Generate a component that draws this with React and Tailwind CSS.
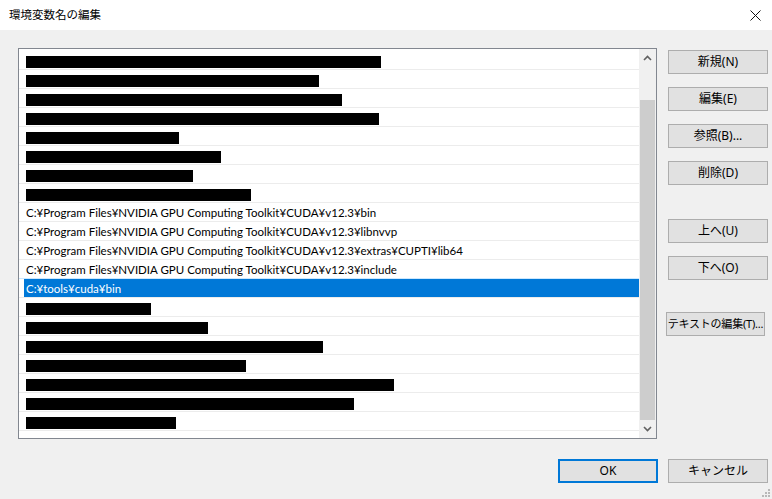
import React from "react";

const rows = [
  { bar: 355 },
  { bar: 293 },
  { bar: 316 },
  { bar: 353 },
  { bar: 153 },
  { bar: 195 },
  { bar: 167 },
  { bar: 225 },
  { text: "C:¥Program Files¥NVIDIA GPU Computing Toolkit¥CUDA¥v12.3¥bin" },
  { text: "C:¥Program Files¥NVIDIA GPU Computing Toolkit¥CUDA¥v12.3¥libnvvp" },
  { text: "C:¥Program Files¥NVIDIA GPU Computing Toolkit¥CUDA¥v12.3¥extras¥CUPTI¥lib64" },
  { text: "C:¥Program Files¥NVIDIA GPU Computing Toolkit¥CUDA¥v12.3¥include" },
  { text: "C:¥tools¥cuda¥bin", selected: true },
  { bar: 125 },
  { bar: 182 },
  { bar: 297 },
  { bar: 220 },
  { bar: 368 },
  { bar: 328 },
  { bar: 150 },
];

const listFont = { fontFamily: 'Lato, "Noto Sans CJK JP", sans-serif' };

function Btn({ children, className = "" }) {
  return (
    <div
      className={
        "h-[24px] flex items-center justify-center whitespace-nowrap bg-[#e1e1e1] border border-[#adadad] text-black " +
        className
      }
    >
      {children}
    </div>
  );
}

export default function App() {
  return (
    <div
      className="w-[772px] h-[499px] bg-[#f0f0f0] flex flex-col relative overflow-hidden"
      style={{ fontFamily: '"Noto Sans", "Noto Sans CJK JP", sans-serif' }}
    >
      {/* title bar */}
      <div className="h-[30px] bg-white flex items-center justify-between pl-[9px] pr-[11px]">
        <span className="text-[11.5px] text-black leading-none">環境変数名の編集</span>
        <svg width="11" height="11" viewBox="0 0 11 11">
          <path d="M0.5 0.5 L10.5 10.5 M10.5 0.5 L0.5 10.5" stroke="#111" strokeWidth="1" />
        </svg>
      </div>

      {/* body */}
      <div className="flex pl-[18px] pt-[18px]">
        <div className="w-[639px] h-[391px] border border-[#828790] bg-white flex">
          <div className="w-[620px] pt-[2px] flex flex-col" style={listFont}>
            {rows.map((r, i) => (
              <div
                key={i}
                className={
                  "h-[19px] border-b flex " +
                  (rows[i + 1] && rows[i + 1].selected ? "border-[#cce8ff]" : "border-[#ececec]")
                }
              >
                {r.bar ? (
                  <div className="pl-[7px] pt-[5px]">
                    <div className="h-[12px] bg-black" style={{ width: r.bar }} />
                  </div>
                ) : r.selected ? (
                  <div className="ml-[5px] flex-1 bg-[#0078d7] text-white text-[11.5px] leading-[18px] pt-[1px] pl-[2px] whitespace-nowrap">
                    {r.text}
                  </div>
                ) : (
                  <div className="pl-[7px] pt-[1px] text-[11.5px] leading-[17px] text-black whitespace-nowrap">
                    {r.text}
                  </div>
                )}
              </div>
            ))}
          </div>
          {/* scrollbar */}
          <div className="w-[17px] bg-[#f0f0f0] flex flex-col">
            <div className="h-[17px] flex items-center justify-center">
              <svg width="9" height="6" viewBox="0 0 9 6">
                <path d="M1 5 L4.5 1.5 L8 5" stroke="#606060" strokeWidth="1.6" fill="none" />
              </svg>
            </div>
            <div className="h-[34px]" />
            <div className="h-[320px] mx-[1px] bg-[#cdcdcd]" />
            <div className="flex-1 flex items-center justify-center">
              <svg width="9" height="6" viewBox="0 0 9 6">
                <path d="M1 1 L4.5 4.5 L8 1" stroke="#606060" strokeWidth="1.6" fill="none" />
              </svg>
            </div>
          </div>
        </div>

        {/* right buttons */}
        <div className="ml-[11px] pt-[2px] flex flex-col text-[12px]">
          <Btn className="w-[100px]">新規(N)</Btn>
          <Btn className="w-[100px] mt-[13px]">編集(E)</Btn>
          <Btn className="w-[100px] mt-[13px]">参照(B)...</Btn>
          <Btn className="w-[100px] mt-[13px]">削除(D)</Btn>
          <Btn className="w-[100px] mt-[34px]">上へ(U)</Btn>
          <Btn className="w-[100px] mt-[13px]">下へ(O)</Btn>
          <Btn className="w-[99px] mt-[32px] -ml-[2px] text-[11px] tracking-[-0.2px]">テキストの編集(T)...</Btn>
        </div>
      </div>

      {/* footer */}
      <div className="flex justify-end pr-[4px] mt-[20px] gap-[10px] text-[12px]">
        <div className="w-[100px] h-[24px] flex items-center justify-center bg-[#e1e1e1] border-2 border-[#0078d7] text-black">
          OK
        </div>
        <Btn className="w-[100px]">キャンセル</Btn>
      </div>

      {/* resize grip */}
      <svg className="absolute right-[2px] bottom-[2px]" width="8" height="8" viewBox="0 0 8 8">
        <rect x="6" y="0" width="2" height="2" fill="#b8b8b8" />
        <rect x="3" y="3" width="2" height="2" fill="#b8b8b8" />
        <rect x="6" y="3" width="2" height="2" fill="#b8b8b8" />
        <rect x="0" y="6" width="2" height="2" fill="#b8b8b8" />
        <rect x="3" y="6" width="2" height="2" fill="#b8b8b8" />
        <rect x="6" y="6" width="2" height="2" fill="#b8b8b8" />
      </svg>
    </div>
  );
}
